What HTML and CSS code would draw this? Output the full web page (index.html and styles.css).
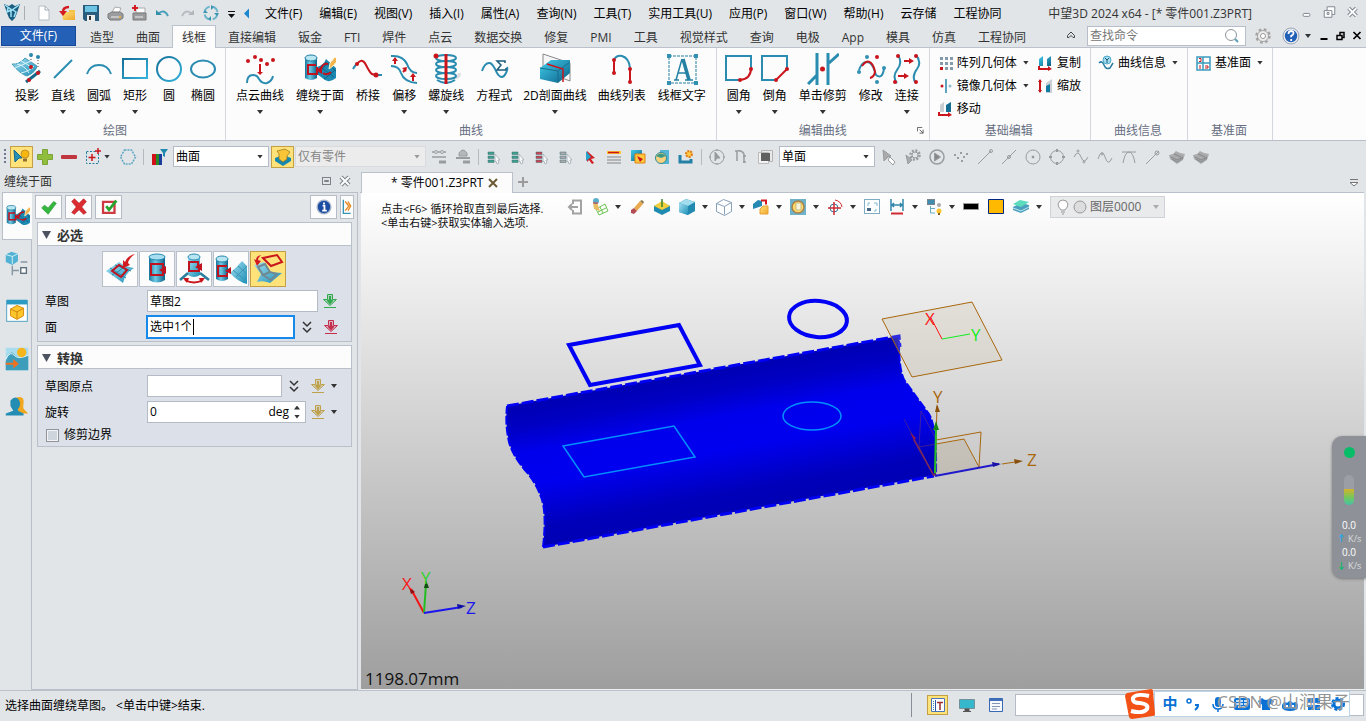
FILE: index.html
```html
<!DOCTYPE html>
<html lang="zh-CN">
<head>
<meta charset="utf-8">
<title>中望3D 2024 x64</title>
<link rel="stylesheet" href="styles.css">
</head>
<body>
<svg class="defs" aria-hidden="true">
<defs>
<linearGradient id="cyl" x1="0" x2="1" y1="0" y2="0"><stop offset="0" stop-color="#17759b"/><stop offset=".4" stop-color="#6fcbe6"/><stop offset="1" stop-color="#0d6287"/></linearGradient>
<linearGradient id="mesh" x1="0" x2="1" y1="0" y2="1"><stop offset="0" stop-color="#a5e1f2"/><stop offset="1" stop-color="#1c8fb7"/></linearGradient>
<linearGradient id="deep" x1="0" x2="1" y1="0" y2="1"><stop offset="0" stop-color="#41cdec"/><stop offset="1" stop-color="#0a5f86"/></linearGradient>
<linearGradient id="pipe" x1="0" x2="1" y1="0" y2="1"><stop offset="0" stop-color="#156f98"/><stop offset="1" stop-color="#35b3dc"/></linearGradient>
<linearGradient id="gold" x1="0" x2="1" y1="0" y2="1"><stop offset="0" stop-color="#ffe07a"/><stop offset="1" stop-color="#f0a828"/></linearGradient>
<linearGradient id="surf" gradientUnits="userSpaceOnUse" x1="506" y1="405" x2="532" y2="548"><stop offset="0" stop-color="#0000b2"/><stop offset=".16" stop-color="#0000c4"/><stop offset=".34" stop-color="#0000ec"/><stop offset=".56" stop-color="#0000f0"/><stop offset=".7" stop-color="#0000d8"/><stop offset=".86" stop-color="#0000ba"/><stop offset="1" stop-color="#0000b4"/></linearGradient>
</defs>
<symbol id="wrap" viewBox="0 0 32 32">
<path d="M13 14q7-2 9-8l10 9v10q-6 5-11 2l-8-6z" fill="#1c8ab2"/><path d="M16 14l14 10M21 9l11 9M14 20l8-8 9-5M20 26q5-3 11-9" stroke="#0f6488" fill="none"/>
<path d="M1 5v20q6 4 12 0V5z" fill="url(#cyl)"/><ellipse cx="7" cy="5" rx="6" ry="3" fill="#b9e6f3" stroke="#1c7ba0"/>
<path d="M12 12H4v9h9V14" fill="none" stroke="#c1121f" stroke-width="2"/><path d="M12 17l6-4v8z" fill="#c1121f"/><path d="M17 16q2-6 7-5m-5 9q4 3 8-1" fill="none" stroke="#c1121f" stroke-width="2"/><path d="M25 16l1-6 5-6 3 3-5 6z" fill="#f4b24a" stroke="#fff2d0"/>
</symbol>
<symbol id="down" viewBox="0 0 16 16"><path d="M5.500 1.500h5v5h4L8 12.500 1.500 6.500h4z" fill="currentColor" fill-opacity=".25" stroke="currentColor"/><path d="M8 3v6M5.500 7l2.500 3 2.500-3" stroke="currentColor" stroke-width="2" fill="none"/><path d="M2 14.500h12" stroke="currentColor"/></symbol>
<symbol id="chev" viewBox="0 0 12 14"><path d="M2 2l4 4 4-4M2 8l4 4 4-4" fill="none" stroke="#333" stroke-width="1.500"/></symbol>
<symbol id="rows" viewBox="0 0 24 24"><path d="M6 7h6v2.500H6zM6 11h6v2.500H6zM6 15h6v2.500H6z" fill="currentColor" stroke="#46707c" stroke-width=".5"/><path d="M13 9l5 6h-2l1 3-2 1-1-3-1 1z" fill="#f4f6f8" stroke="#9aa6ae" stroke-width=".7"/></symbol>
<symbol id="layers" viewBox="0 0 24 24"><path d="M4 10l4-1 3-3 4 2 5 1-2 6-6 4-7-5z" fill="#a9abad"/><path d="M6 12l6 3 6-3M9 9l7 3M7 14l5 3 6-4" stroke="#858789" fill="none"/></symbol>
</svg>

<header class="titlebar">
<div class="quick">
<svg class="logo" viewBox="0 0 24 24"><path d="M4 3l5 2 3-2 3 2 5-2-3 9-2 5-3 3-3-3-2-5z" fill="#1d5f83"/><path d="M5 4l7 5 7-5M8 7l-1 4 4-2v7M13 9l3 2-2 5" stroke="#9ce1f4" stroke-width="1.500" fill="none"/></svg>
<i class="bar"></i>
<button aria-label="新建"><svg viewBox="0 0 24 24"><path d="M8 5h6l4 4v10H8z" fill="#fff" stroke="#b8bec5"/><path d="M14 5v4h4" fill="none" stroke="#a0a8b0"/></svg></button>
<button aria-label="打开"><svg viewBox="0 0 24 24"><path d="M7 11h13v8H8z" fill="url(#gold)"/><path d="M14 9h6v2h-6z" fill="#f2c347"/><path d="M14 6q-6 0-6 5" fill="none" stroke="#d31c21" stroke-width="2.500"/><path d="M4 10h8l-4 5z" fill="#d31c21"/></svg></button>
<button aria-label="保存"><svg viewBox="0 0 24 24"><path d="M4 4h16v16H6l-2-2z" fill="#2a5d7d"/><path d="M6 5h12v6H6z" fill="#6cc4e2"/><path d="M8 14h8v6H8z" fill="#eee"/><path d="M10 15h2v4h-2z" fill="#333"/></svg></button>
<button aria-label="打印"><svg viewBox="0 0 24 24"><path d="M9 11l3-5 6 1-2 5z" fill="#fff" stroke="#aaa"/><path d="M5 13l4-2h8l3 2v4l-3 2H7l-2-2z" fill="#9b9c9e" stroke="#7b7b7b"/><path d="M8 16h8" stroke="#eee"/><circle cx="17" cy="16" r="1" fill="#eeb428"/></svg></button>
<button aria-label="打印预览"><svg viewBox="0 0 24 24"><path d="M9 7h9v5H9z" fill="#fff" stroke="#aaa"/><path d="M6 12h13v7H6z" fill="#9b9c9e" stroke="#7b7b7b"/><path d="M8 16h8" stroke="#eee"/><path d="M8 4v6M5 7h6" stroke="#d31c21" stroke-width="2"/></svg></button>
<button aria-label="撤销"><svg viewBox="0 0 24 24"><path d="M8 12q6-4 9 3" stroke="#4aa0bb" stroke-width="2" fill="none"/><path d="M5 9v5h6z" fill="#318fac"/></svg></button>
<button aria-label="重做"><svg viewBox="0 0 24 24"><path d="M16 12q-6-4-9 3" stroke="#b9bdc1" stroke-width="2" fill="none"/><path d="M19 9v5h-6z" fill="#b2b7bc"/></svg></button>
<button aria-label="刷新"><svg viewBox="0 0 24 24"><circle cx="12" cy="12" r="6.500" fill="none" stroke="#6db4ca" stroke-width="2" stroke-dasharray="7.200 3" stroke-dashoffset="-1"/><path d="M12 4l3 2-3 3zM20 12l-2 3-3-3zM12 20l-3-2 3-3zM4 12l2-3 3 3z" fill="#3a95b3"/></svg></button>
<button class="narrow" aria-label="自定义"><svg viewBox="0 0 16 24"><path d="M5 10.500h7" stroke="#111"/><path d="M5 13h7l-3.500 4z" fill="#111"/></svg></button>
<button class="narrow" aria-label="返回"><svg viewBox="0 0 16 24"><path d="M5 12.500l5-5v10z" fill="#1b87cf"/></svg></button>
</div>
<nav class="menu"><a href="#">文件(F)</a><a href="#">编辑(E)</a><a href="#">视图(V)</a><a href="#">插入(I)</a><a href="#">属性(A)</a><a href="#">查询(N)</a><a href="#">工具(T)</a><a href="#">实用工具(U)</a><a href="#">应用(P)</a><a href="#">窗口(W)</a><a href="#">帮助(H)</a><a href="#">云存储</a><a href="#">工程协同</a></nav>
<h1>中望3D 2024 x64 - [* 零件001.Z3PRT]</h1>
<div class="winctl">
<button aria-label="最小化"><svg viewBox="0 0 24 24"><rect x="8.500" y="12.500" width="7" height="3" rx="1" fill="#fff" stroke="#7d858e"/></svg></button>
<button aria-label="还原"><svg viewBox="0 0 24 24"><path d="M9.500 5.500h8v8h-3v3h-8v-7h3z" fill="#fff" stroke="#7d858e"/><path d="M9 9.500h5.500v4M9.500 11.500h2v2h-2z" fill="none" stroke="#7d858e"/></svg></button>
<button aria-label="关闭"><svg viewBox="0 0 24 24"><path d="M8 7l8 8M16 7l-8 8" stroke="#7d858e" stroke-width="4"/><path d="M8 7l8 8M16 7l-8 8" stroke="#fff" stroke-width="2"/></svg></button>
</div>
</header>

<div class="tabbar">
<button class="file">文件(F)</button>
<nav class="tabs"><a href="#">造型</a><a href="#">曲面</a><a href="#" class="on">线框</a><a href="#">直接编辑</a><a href="#">钣金</a><a href="#">FTI</a><a href="#">焊件</a><a href="#">点云</a><a href="#">数据交换</a><a href="#">修复</a><a href="#">PMI</a><a href="#">工具</a><a href="#">视觉样式</a><a href="#">查询</a><a href="#">电极</a><a href="#">App</a><a href="#">模具</a><a href="#">仿真</a><a href="#">工程协同</a></nav>
<div class="tabtools">
<button aria-label="折叠"><svg viewBox="0 0 24 24"><path d="M9.500 11.500L13 8l3.500 3.500M9.500 11.500v2h1.500l2-2 2 2h1.500v-2" fill="none" stroke="#444"/></svg></button>
<label class="search"><input type="text" placeholder="查找命令" aria-label="查找命令"><svg viewBox="0 0 18 18"><circle cx="8" cy="8" r="5.500" fill="#fff" stroke="#8a959c"/><path d="M12 12l3 3" stroke="#5d9eb0" stroke-width="2"/></svg></label>
<button class="gear" aria-label="设置"><svg viewBox="0 0 24 24"><circle cx="12" cy="12" r="6.500" fill="#e8e8e8" stroke="#a4a4a4" stroke-width="2.500" stroke-dasharray="2.700 2.400"/><circle cx="12" cy="12" r="5.500" fill="#ececec" stroke="#a4a4a4"/><circle cx="12" cy="12" r="2.500" fill="#fff" stroke="#999"/></svg></button>
<button aria-label="帮助"><svg viewBox="0 0 24 24"><circle cx="12" cy="12" r="7" fill="#2360b8" stroke="#eee" stroke-width="1.500"/><circle cx="12" cy="12" r="8" fill="none" stroke="#7a8ba3" stroke-width=".7"/><path d="M9.500 10q0-3 2.700-3 2.500.2 2.300 2.300-.2 1.300-2.300 2.500v1.500M12.200 15v2" stroke="#fff" stroke-width="1.800" fill="none"/></svg></button>
<i class="caret"></i>
<div class="mdi">
<button aria-label="最小化文档"><svg viewBox="0 0 16 24"><path d="M5 15h7" stroke="#000" stroke-width="2"/></svg></button>
<button aria-label="还原文档"><svg viewBox="0 0 16 24"><path d="M4.500 11.500h5v4h-5zM7.500 11V8.500h4v5H10" fill="none" stroke="#000" stroke-width="1.500"/></svg></button>
<button aria-label="关闭文档"><svg viewBox="0 0 16 24"><path d="M4 8l7 7M11 8l-7 7" stroke="#000" stroke-width="1.700"/></svg></button>
</div>
</div>
</div>

<div class="ribbon">
<section class="group first">
<div class="tools">
<button class="big"><svg viewBox="0 0 32 32"><path d="M1 11q7 1 13-6l12 8q-1 6-10 10-7-2-15-12z" fill="url(#mesh)" stroke="#4a9dba"/><path d="M6 11q7 1 12 9M10 8q7 3 12 8M4 15l16-7M10 20q9-2 13-7" fill="none" stroke="#dff5fc"/><path d="M20 3v4M27 4v11" stroke="#444" stroke-dasharray="1 2"/><circle cx="20" cy="2" r="2" fill="#2a86aa"/><circle cx="27" cy="4" r="2" fill="#2a86aa"/><path d="M15 29l14-11" stroke="#15688b" stroke-width="3"/><circle cx="20" cy="14" r="2" fill="#c9161d"/><circle cx="18" cy="27" r="2" fill="#c9161d"/><circle cx="27" cy="20" r="2" fill="#c9161d"/></svg><span>投影</span><i class="caret"></i></button>
<button class="big"><svg viewBox="0 0 32 32"><path class="t" d="M7 25L25 7"/></svg><span>直线</span><i class="caret"></i></button>
<button class="big"><svg viewBox="0 0 32 32"><path class="t" d="M4 21q3-9 12-9 9 0 12 9"/></svg><span>圆弧</span><i class="caret"></i></button>
<button class="big"><svg viewBox="0 0 32 32"><rect class="t" x="4" y="6" width="24" height="19"/></svg><span>矩形</span><i class="caret"></i></button>
<button class="big one"><svg viewBox="0 0 32 32"><circle class="t" cx="16" cy="16" r="12"/></svg><span>圆</span></button>
<button class="big"><svg viewBox="0 0 32 32"><ellipse class="t" cx="16" cy="16" rx="12" ry="8.500"/></svg><span>椭圆</span></button>
</div><h2>绘图</h2></section>

<section class="group">
<div class="tools">
<button class="big"><svg viewBox="0 0 32 32"><path class="t" d="M3 30q0-8 6-8 4 0 6 4 3 5 8 4 5-2 6-7"/><path class="r" d="M16 11v9"/><path class="rf" d="M13 19h6l-3 3z"/><g class="rf"><circle cx="4" cy="8" r="2"/><circle cx="11" cy="4" r="2"/><circle cx="17" cy="7" r="2"/><circle cx="23" cy="11" r="2"/><circle cx="29" cy="7" r="2"/></g></svg><span>点云曲线</span><i class="caret"></i></button>
<button class="big"><svg><use href="#wrap"/></svg><span>缠绕于面</span><i class="caret"></i></button>
<button class="big"><svg viewBox="0 0 32 32"><path class="t" d="M1 16q3-5 5-6M24 22h6"/><path class="r" d="M5 11q5-7 9 1t6 9q2 1 5 1"/><circle class="rf" cx="5" cy="11" r="2"/><circle class="rf" cx="24" cy="22" r="2.500"/></svg><span>桥接</span></button>
<button class="big"><svg viewBox="0 0 32 32"><path class="t" d="M3 3q12-1 16 8 3 9 10 9M3 13q8 0 10 7 3 9 16 10"/><path class="r" d="M7 11V6M15 19l3-3M25 28v-6"/><path class="rf" d="M4 8l3-4 3 4zM14 15l5-1-1 5zM22 24l3-4 3 4z"/></svg><span>偏移</span><i class="caret"></i></button>
<button class="big"><svg viewBox="0 0 32 32"><path d="M18 26q13-1 11-6" fill="none" stroke="#ddd" stroke-width="3"/><g class="t"><ellipse cx="16" cy="5" rx="10" ry="3"/><ellipse cx="16" cy="11" rx="10" ry="3"/><ellipse cx="16" cy="17" rx="10" ry="3"/><ellipse cx="16" cy="23" rx="10" ry="3"/><path d="M7 27q9 6 18 0"/></g><path d="M16 1v30" stroke="#c9161d" stroke-width="3"/><circle class="rf" cx="6" cy="3" r="2.500"/></svg><span>螺旋线</span><i class="caret"></i></button>
<button class="big"><svg viewBox="0 0 32 32"><path class="t" d="M4 18q3-9 8-8 3 1 7 10 5 8 9 0 2-4 1-6"/><path d="M27 10V8h-8l4 4-4 5h9v-2" fill="none" stroke="#195c7a" stroke-width="1.500"/></svg><span>方程式</span></button>
<button class="big snug"><svg viewBox="0 0 32 32"><path d="M4 1l27 9v18L4 18z" fill="#f7f7f7" stroke="#888"/><path d="M1 15l11-8h19v13L19 30 1 26z" fill="url(#deep)"/><path d="M1 15l18 3 12-9M19 18v11" fill="none" stroke="#1b6d8d"/><path d="M8 11l16 5v13" fill="none" stroke="#c9161d" stroke-width="1.500"/></svg><span>2D剖面曲线</span><i class="caret"></i></button>
<button class="big"><svg viewBox="0 0 32 32"><path class="t" d="M8 7q2-5 8-4 7 2 8 12"/><path class="r" d="M8 7v13M24 16v13"/><g class="rf"><circle cx="8" cy="7" r="2"/><circle cx="8" cy="20" r="2"/><circle cx="24" cy="16" r="2"/><circle cx="24" cy="29" r="2"/></g></svg><span>曲线列表</span></button>
<button class="big"><svg viewBox="0 0 32 32"><rect x="3" y="3" width="27" height="27" fill="none" stroke="#247fa1" stroke-dasharray="3 1"/><path d="M17 6l6 21" fill="none" stroke="#2580a3" stroke-width="3.500"/><path d="M16 6L10 27M12 20h9M8 27h5M19 27h8" fill="none" stroke="#2580a3" stroke-width="1.500"/><path d="M1 1h4v4H1zM28 1h4v4h-4zM1 28h4v4H1zM28 28h4v4h-4z" fill="#3291b3"/></svg><span>线框文字</span></button>
</div><h2>曲线</h2></section>

<section class="group">
<div class="tools">
<button class="big"><svg viewBox="0 0 32 32"><path class="t" d="M28 15V3H3v24h14"/><path class="r" d="M17 27q11-1 11-12"/><circle class="rf" cx="17" cy="27" r="2"/><circle class="rf" cx="28" cy="16" r="2"/></svg><span>圆角</span><i class="caret"></i></button>
<button class="big"><svg viewBox="0 0 32 32"><path class="t" d="M28 15V3H3v24h14"/><path class="r" d="M17 27l11-11"/><circle class="rf" cx="17" cy="27" r="2"/><circle class="rf" cx="28" cy="16" r="2"/></svg><span>倒角</span><i class="caret"></i></button>
<button class="big"><svg viewBox="0 0 32 32"><path class="t thick" d="M10 0v32M21 0v32M1 31l9-9M22 10l10-9"/><circle class="rf" cx="15.500" cy="16" r="2.500"/></svg><span>单击修剪</span><i class="caret"></i></button>
<button class="big"><svg viewBox="0 0 32 32"><path class="t" d="M4 17q4-11 11-7 3 2 6 12 6 5 8-6"/><path class="r" d="M7 13q5-7 9-3 3 3 4 9-1 5-5 6"/><circle class="rf" cx="22" cy="4" r="2"/><g fill="#3291b3"><circle cx="12" cy="4" r="2"/><circle cx="4" cy="19" r="2"/><circle cx="29" cy="15" r="2"/><circle cx="22" cy="29" r="2"/></g></svg><span>修改</span></button>
<button class="big"><svg viewBox="0 0 32 32"><path class="t" d="M7 2q5 8-1 15-5 7 0 13M25 2q6 7 1 14-6 8-1 14"/><path class="r" d="M13 8h7M7 23h7"/><path class="rf" d="M18 5l5 3-5 3zM13 20l5 3-5 3z"/><g class="rf"><circle cx="7" cy="3" r="2"/><circle cx="25" cy="3" r="2"/><circle cx="4" cy="29" r="2"/><circle cx="25" cy="29" r="2"/></g></svg><span>连接</span><i class="caret"></i></button>
</div><h2>编辑曲线<svg class="launch" viewBox="0 0 8 8"><path d="M.500 5V.500H6M3 3l4 4M7 3v4H3" fill="none" stroke="#555"/></svg></h2></section>

<section class="group small">
<div class="tools">
<div class="col">
<button><svg viewBox="0 0 16 16"><g fill="#849bab"><path d="M3 2h3v3H3zM8 2h3v3H8zM13 2h3v3h-3zM3 7h3v3H3zM8 7h3v3H8zM13 7h3v3h-3zM8 12h3v3H8zM13 12h3v3h-3z"/></g><path class="rf" d="M3 12h3v3H3z"/></svg>阵列几何体<i class="caret"></i></button>
<button><svg viewBox="0 0 16 16"><path d="M9 1v14" stroke="#2686aa" stroke-width="1.500"/><circle class="rf" cx="5" cy="8" r="1.500"/><circle cx="13" cy="8" r="1.500" fill="#8fbccd"/></svg>镜像几何体<i class="caret"></i></button>
<button><svg viewBox="0 0 16 16"><path d="M3 11V4l4-3v10z" fill="#c9ced2"/><path d="M9 11V4l5-3v10z" fill="#156d91"/><path class="r" d="M2 11v3h11"/><path class="rf" d="M11 11l4 3-4 2z"/></svg>移动</button>
</div>
<div class="col">
<button><svg viewBox="0 0 16 16"><path d="M2 11V4l4-3v10zM10 11V4l4-3v10z" fill="url(#deep)"/><path class="r" d="M2 11v3h11"/><path class="rf" d="M11 11l4 3-4 2z"/></svg>复制</button>
<button><svg viewBox="0 0 16 16"><path class="r" d="M3 2v12"/><path class="rf" d="M1 4l2-3 2 3zM1 12l2 3 2-3z"/><path d="M9 15V5l6-4v14z" fill="#c9cfd2"/><path d="M9 14V8l4-2v8z" fill="#107ba2"/></svg>缩放</button>
</div>
</div><h2>基础编辑</h2></section>
<section class="group small"><div class="tools"><button><svg viewBox="0 0 16 16"><path d="M1 8q3-3 5 2t6 3l3-5" fill="none" stroke="#287ca1" stroke-width="1.500"/><circle cx="9" cy="5" r="4" fill="#a5dbef" stroke="#4da9ca"/><path d="M7 3l2 2 2-2M9 5v3" fill="none" stroke="#165d7d"/></svg>曲线信息<i class="caret"></i></button></div><h2>曲线信息</h2></section>
<section class="group small"><div class="tools"><button><svg viewBox="0 0 16 16"><path d="M2 2h13v13H2zM8 2v13M2 8h13" fill="#fff" stroke="#3a9abc" stroke-width="1.500"/><path d="M4 3.500h2v3H4M5 10v4M10 11h3v2h-3" fill="none" stroke="#c9161d"/></svg>基准面<i class="caret"></i></button></div><h2>基准面</h2></section>
</div>

<div class="toolbar">
<i class="grip"></i>
<button class="hot" aria-label="拾取提示"><svg viewBox="0 0 24 24"><path d="M4 5l8 8H9l-4 4z" fill="#268fb5" stroke="#15688a"/><circle cx="15" cy="9" r="4" fill="#f6b80d" stroke="#c8902a"/><path d="M13 15h4" stroke="#93702d" stroke-width="3"/></svg></button>
<button aria-label="添加"><svg viewBox="0 0 24 24"><path d="M9.500 4.500h5v5h5v5h-5v5h-5v-5h-5v-5h5z" fill="#90bd3c" stroke="#7ba438"/></svg></button>
<button aria-label="移除"><svg viewBox="0 0 24 24"><rect x="4" y="10" width="16" height="4" rx="1" fill="#bf3640"/></svg></button>
<button aria-label="框选"><svg viewBox="0 0 24 24"><path d="M5.500 6.500h12v12h-12z" fill="none" stroke="#237e9e" stroke-dasharray="2 1.500"/><path d="M11 9v7M7.500 12.500h7M17 3v6M14 6h6" stroke="#c9161d" stroke-width="1.500"/></svg></button>
<i class="caret"></i>
<button class="off2" aria-label="多边形选择"><svg viewBox="0 0 24 24"><path d="M8.500 5h7l4 7-4 7h-7l-4-7z" fill="none" stroke="#61a8c2" stroke-width="1.500" stroke-dasharray="2 1"/></svg></button>
<i class="sep"></i>
<button aria-label="过滤器"><svg viewBox="0 0 24 24"><path d="M5 9h4v11H5z" fill="#d01218"/><path d="M9 9h3v11H9z" fill="#268826"/><path d="M12 9h3v11h-3z" fill="#1a3c9a"/><path d="M13 4h8l-3 4v4l-2-1V8z" fill="#2089af"/></svg></button>
<label class="combo"><select aria-label="过滤类型"><option>曲面</option></select><i class="caret"></i></label>
<button class="hot" aria-label="仅拾取"><svg viewBox="0 0 24 24"><path d="M4 13l8-3 8 3v3l-8 5-8-5z" fill="#1687ad"/><path d="M6 6l8-2 5 3-3 4v3l-4 3-4-3V9z" fill="#f8c537" stroke="#94721c" stroke-width=".7"/></svg></button>
<label class="combo wide dis"><select aria-label="范围" disabled><option>仅有零件</option></select><i class="caret"></i></label>
<button class="g" aria-label="链"><svg viewBox="0 0 24 24"><path d="M5 7h2M11 7h2M17 7h2M5 12h14" stroke-width="1.500"/><circle cx="9" cy="7" r="1.500"/><circle cx="15" cy="7" r="1.500"/><path d="M12 17h7" stroke-width="3"/></svg></button>
<button class="g" aria-label="相切链"><svg viewBox="0 0 24 24"><path d="M8 11V8q4-6 8 0v3z" fill="#b5b7b9"/><path d="M5 13h14" stroke-width="2"/><path d="M12 17h7" stroke-width="3"/></svg></button>
<i class="sep"></i>
<button class="cgreen" aria-label="选择全部"><svg><use href="#rows"/></svg></button>
<button class="cgreen" aria-label="选择最后"><svg><use href="#rows"/></svg></button>
<button class="cred" aria-label="反选"><svg><use href="#rows"/></svg></button>
<button class="cgray" aria-label="无选择"><svg><use href="#rows"/></svg></button>
<button aria-label="指针"><svg viewBox="0 0 24 24"><path d="M9 6l8 7-4 1 3 4-2 1-3-4-2 2z" fill="#d31c21"/><path d="M8 6v10l5-4z" fill="#25a5cc"/></svg></button>
<button aria-label="列表"><svg viewBox="0 0 24 24"><path d="M5 6h14v3H5z" fill="#ffc42d"/><path d="M6 7.500h11" stroke="#c9161d" stroke-width="1.500"/><path d="M5 12h14M5 15h14M5 18h14" stroke="#a5a5a5" stroke-width="1.500"/></svg></button>
<button aria-label="选取"><svg viewBox="0 0 24 24"><path d="M5 5h11v11H5z" fill="url(#deep)"/><path d="M9 9h10v9H9z" fill="#ffc83d" stroke="#e38313"/><path d="M11 11l6 3-3 3z" fill="#c9161d"/></svg></button>
<button aria-label="球"><svg viewBox="0 0 24 24"><path d="M10 5h9v14h-9z" fill="#53b5d3"/><circle cx="11" cy="13" r="5.500" fill="#f7d17f" stroke="#2d8b96"/><path d="M6 11q5-5 10 0l-5 2z" fill="#3c9985"/></svg></button>
<button aria-label="配置"><svg viewBox="0 0 24 24"><path d="M6 10v7h11v-3" fill="none" stroke="#2580a6" stroke-width="3"/><circle cx="15" cy="9" r="3" fill="#ffc640" stroke="#df7d1b" stroke-width="2" stroke-dasharray="2 1"/></svg></button>
<i class="sep"></i>
<button class="g" aria-label="拾取"><svg viewBox="0 0 24 24"><circle cx="12" cy="12" r="7"/><path d="M12 4v2M12 18v2M4 12h2M18 12h2"/><path d="M10 7l5 6h-3l-2 3z" fill="#999"/></svg></button>
<button class="g" aria-label="曲线拾取"><svg viewBox="0 0 24 24"><path d="M8 16V6q5-1 7 3v9M6 6h3M14 11h3M14 17h3" stroke-width="1.500"/></svg></button>
<button aria-label="面"><svg viewBox="0 0 24 24"><path d="M8.500 5.500h11v11h-11z" fill="#e8e8e8" stroke="#b4b4b4"/><path d="M5.500 7.500h10v11h-10z" fill="#f2f2f2" stroke="#bbb"/><path d="M8 8h9v8H8z" fill="#606060"/></svg></button>
<label class="combo"><select aria-label="面类型"><option>单面</option></select><i class="caret"></i></label>
<button class="g" aria-label="光标"><svg viewBox="0 0 24 24"><path d="M6 5l8 6-3 1-4 4z" fill="#aaa"/><path d="M13 12l5 5-2 3-5-5z" fill="#fff"/></svg></button>
<button class="g" aria-label="光标设置"><svg viewBox="0 0 24 24"><circle cx="14" cy="10" r="4.500" stroke-width="2.500" stroke-dasharray="2 1.500"/><circle cx="14" cy="10" r="3"/><path d="M5 10l6 5-4 4z" fill="#aaa"/></svg></button>
<button class="g" aria-label="播放"><svg viewBox="0 0 24 24"><circle cx="12" cy="12" r="7" stroke-width="1.500"/><path d="M9.500 8l6 4-6 4z" fill="#888"/></svg></button>
<button class="g" aria-label="点集"><svg viewBox="0 0 24 24"><path d="M5 10h2M11 8h2M17 9h2M8 13h2M14 12h2M12 16h2" stroke-width="2"/></svg></button>
<button class="g" aria-label="端点"><svg viewBox="0 0 24 24"><path d="M5 19L18 6"/><circle cx="18" cy="6" r="1.500"/></svg></button>
<button class="g" aria-label="中点"><svg viewBox="0 0 24 24"><path d="M5 19L19 5"/><circle cx="12" cy="12" r="1.500"/></svg></button>
<button class="g" aria-label="圆心"><svg viewBox="0 0 24 24"><circle cx="12" cy="12" r="7"/><circle cx="12" cy="12" r="1" fill="#777"/></svg></button>
<button class="g" aria-label="象限点"><svg viewBox="0 0 24 24"><circle cx="12" cy="12" r="6.500"/><path d="M12 4v3M12 17v3M4 12h3M17 12h3" stroke-width="2"/></svg></button>
<button class="g" aria-label="拐点"><svg viewBox="0 0 24 24"><path d="M5 12q4-8 7 0t7 0"/><circle cx="9" cy="6" r="1"/><circle cx="15" cy="17" r="1"/></svg></button>
<button class="g" aria-label="曲线点"><svg viewBox="0 0 24 24"><path d="M5 14q4-12 7-2t7 1"/><circle cx="9" cy="9" r="1"/></svg></button>
<button class="g" aria-label="相切"><svg viewBox="0 0 24 24"><path d="M5 7h14M6 18q2-11 6-11t6 11"/></svg></button>
<button class="g" aria-label="垂直"><svg viewBox="0 0 24 24"><path d="M5 19L18 6"/><circle cx="16" cy="8" r="2"/></svg></button>
<button aria-label="面上点"><svg><use href="#layers"/></svg></button>
<button aria-label="面中点"><svg><use href="#layers"/></svg></button>
</div>

<main>
<aside>
<div class="ptitle"><span>缠绕于面</span><button aria-label="停靠"><svg viewBox="0 0 16 16"><rect x="4.500" y="3.500" width="8" height="7" fill="none" stroke="#7c8288"/><path d="M6.500 6.500h4v1h-4z" fill="none" stroke="#7c8288"/></svg></button><button aria-label="关闭面板"><svg viewBox="0 0 16 16"><path d="M4 3l8 8M12 3l-8 8" stroke="#7c8288" stroke-width="4"/><path d="M4 3l8 8M12 3l-8 8" stroke="#fff" stroke-width="2"/></svg></button></div>
<div class="pbody">
<nav class="side">
<a href="#" class="on" aria-label="缠绕于面"><svg><use href="#wrap"/></svg></a>
<a href="#" aria-label="管理器"><svg viewBox="0 0 32 32"><path d="M4 7l6-3 7 2v8l-6 4-7-3z" fill="#51b2d4"/><path d="M4 7l7 2 6-3M11 9v8" stroke="#d7f2fa" fill="none"/><path d="M11 19v10M11 24h7M20 15h7" stroke="#8796a2" stroke-width="1.500"/><rect x="20" y="21" width="6" height="6" fill="#fff" stroke="#60717d" stroke-width="1.500"/></svg></a>
<a href="#" aria-label="视图"><svg viewBox="0 0 32 32"><rect x="5" y="5" width="22" height="22" fill="#fff" stroke="#4a9fbd"/><path d="M5 4h22v5H5z" fill="#2a9bc2"/><path d="M9 14l7-4 7 3v8l-7 4-7-4z" fill="#ffc52d" stroke="#d68b0b"/><path d="M9 14l7 3 7-4M16 17v7" stroke="#c98107" fill="none"/></svg></a>
<a href="#" aria-label="视觉"><svg viewBox="0 0 32 32"><rect x="4" y="4" width="24" height="24" fill="#a8ddf0"/><path d="M4 18q5-13 9-7t15 1v16H4z" fill="#3f9dbc"/><path d="M4 16q5-9 9-4t15 0" fill="none" stroke="#e5f5fb"/><circle cx="21" cy="9" r="5" fill="#f7b51d"/><path d="M4 20h8v-4l6 5-6 5v-4H4z" fill="#ec7321"/></svg></a>
<a href="#" aria-label="用户"><svg viewBox="0 0 32 32"><path d="M15 6q9-3 8 6-1 6 1 7l4 4H17z" fill="#f0a71e"/><path d="M9 9q6-7 10 1 1 5-2 8v2l6 3v2H4v-2l8-3-3-5z" fill="#248db3"/></svg></a>
</nav>
<div class="form">
<div class="actions">
<button aria-label="确定"><svg viewBox="0 0 24 24"><path d="M4 13l3-3 4 3 6-7 3 2-9 12z" fill="#35b63d" stroke="#2c9a38" stroke-width=".7"/></svg></button>
<button aria-label="取消"><svg viewBox="0 0 24 24"><path d="M4 6l3-3 5 5 5-5 3 3-5 6 5 6-3 2-5-5-5 5-3-2 5-6z" fill="#db2a30" stroke="#b52129" stroke-width=".7"/></svg></button>
<button aria-label="应用"><svg viewBox="0 0 24 24"><path d="M16 18.500H5.500v-12H18v12h-3" fill="#fff" stroke="#ce3a42" stroke-width="2.500"/><path d="M9 11l3 4 8-10" fill="none" stroke="#26a52e" stroke-width="3"/></svg></button>
<button class="push" aria-label="信息"><svg viewBox="0 0 24 24"><circle cx="12" cy="12" r="7.500" fill="#1c4da3" stroke="#a7b5ca" stroke-width="1.500"/><path d="M12 7v2M10.500 10.500h2V16M10 16h5" stroke="#fff" stroke-width="2" fill="none"/></svg></button>
<button class="slim" aria-label="展开"><svg viewBox="0 0 12 24"><path d="M2 4v15h8" fill="none" stroke="#3695b8" stroke-width="1.500"/><path d="M4 6l4 5-4 5M7 6l3 5-3 5" fill="none" stroke="#e68a24" stroke-width="1.500"/></svg></button>
</div>
<section class="sec">
<h3><i></i>必选</h3>
<div class="modes">
<button aria-label="模式1"><svg viewBox="0 0 32 32"><path d="M2 18l13-9q7 5 15 6-9 5-11 15Q11 24 2 18z" fill="url(#mesh)"/><path d="M6 15l16 10M11 12l16 6M8 22q7-3 14-10" fill="none" stroke="#2887a8"/><path d="M8 18l7-6 8 5-6 7z" fill="none" stroke="#c1121f" stroke-width="2"/><path d="M31 1q-8 2-10 8l-2-2v8l7-3-2-2q1-5 7-9z" fill="#d31c21"/></svg></button>
<button aria-label="模式2"><svg viewBox="0 0 32 32"><path d="M8 4v23q8 5 16 0V4z" fill="url(#cyl)"/><ellipse cx="16" cy="4" rx="8" ry="3" fill="#a9def0" stroke="#238ab0"/><path d="M22 16v-5H10v11h12v-3" fill="none" stroke="#c1121f" stroke-width="2"/><path d="M18 17l7-4v8z" fill="#c1121f"/></svg></button>
<button aria-label="模式3"><svg viewBox="0 0 32 32"><path d="M10 4v18q6 4 12 0V4z" fill="url(#mesh)"/><ellipse cx="16" cy="4" rx="6" ry="3" fill="#b8e5f2" stroke="#238ab0"/><path d="M20 13V9h-9v9h10v-3" fill="none" stroke="#c1121f" stroke-width="2"/><path d="M17 14l7-4v8z" fill="#c1121f"/><path d="M2 27l8-7M22 20l9 7" stroke="#2a7e9e" stroke-width="2.500"/><path d="M7 27q9 5 18 0" stroke="#c9161d" stroke-width="2" fill="none"/><path class="rf" d="M5 25h6l-2 5zM27 25h-6l2 5z"/></svg></button>
<button aria-label="模式4"><svg viewBox="0 0 32 32"><path d="M15 20q7-6 12-12l5 5v18q-9-2-17-11z" fill="url(#mesh)"/><path d="M18 17l13 11M23 13l9 8M21 24l11-11" stroke="#3d93b0"/><path d="M1 6v20q6 4 12 0V6z" fill="url(#cyl)"/><ellipse cx="7" cy="6" rx="6" ry="3" fill="#b8e5f2" stroke="#238ab0"/><path d="M12 13H3v10h9v-3" fill="none" stroke="#c1121f" stroke-width="2"/><path d="M10 18l6-4v7z" fill="#c1121f"/></svg></button>
<button class="hot" aria-label="模式5"><svg viewBox="0 0 32 32"><path d="M2 12l10-3 6 10 12 1-12 10q-7-3-13-1l4-8z" fill="url(#mesh)"/><path d="M6 14l7-3 5 8-7 3zM11 22l7-3 7 2-6 6z" fill="none" stroke="#6f8994" stroke-width="2"/><path d="M11 5l14-3 5 7-11 4z" fill="none" stroke="#c9161d" stroke-width="2"/><path d="M9 2Q4 3 4 7L2 6l3 7 4-5-3-1q0-2 3-5z" fill="#d31c21"/></svg></button>
</div>
<div class="row"><label for="sk">草图</label><input id="sk" class="w171" value="草图2"><svg class="dn ok"><use href="#down"/></svg></div>
<div class="row"><label for="fc">面</label><span class="focus w149"><input id="fc" value="选中1个"></span><svg class="cv"><use href="#chev"/></svg><svg class="dn bad"><use href="#down"/></svg></div>
</section>
<section class="sec">
<h3><i></i>转换</h3>
<div class="row top"><label for="og">草图原点</label><input id="og" class="w135"><svg class="cv"><use href="#chev"/></svg><svg class="dn far"><use href="#down"/></svg><i class="caret"></i></div>
<div class="row"><label for="rt">旋转</label><span class="num"><input id="rt" value="0"><b>deg</b><span class="spin"><i></i><i></i></span></span><svg class="dn"><use href="#down"/></svg><i class="caret"></i></div>
<label class="check"><input type="checkbox">修剪边界</label>
</section>
</div>
</div>
</aside>

<section class="work">
<div class="docs"><a href="#" class="doc">* 零件001.Z3PRT<svg viewBox="0 0 12 12"><path d="M2 2l8 8M10 2l-8 8" stroke="#6b5a33" stroke-width="2"/></svg></a><button aria-label="新建标签"><svg viewBox="0 0 12 12"><path d="M6 1v10M1 6h10" stroke="#9c9c9c" stroke-width="2"/></svg></button><button class="more" aria-label="更多标签"><svg viewBox="0 0 12 12"><path d="M2 3.500h8M2 6.500h8L6 10z" fill="#fff" stroke="#777"/></svg></button></div>
<div class="view">
<svg class="scene" viewBox="360 192 1003 496" preserveAspectRatio="xMinYMin meet">
<path d="M506 405L898 335L899 346Q898 372 904 380L917 398L928 413Q936 426 935 474L542 546Q546 511 540 496Q535 481 523 468Q511 453 508 441Q504 424 506 405z" fill="url(#surf)"/>
<g fill="none" stroke="#0000f4" stroke-width="2"><path d="M506 405L898 335L899 346M542 546L933 475" stroke-width="3" stroke-dasharray="12 3"/><path d="M898 340Q898 372 904 380L917 398L928 413Q936 426 935 474M542 546Q546 511 540 496Q535 481 523 468Q511 453 508 441Q504 424 506 405" stroke-dasharray="9 2"/></g>
<path d="M568 344L678 324L699 364L589 384z" fill="none" stroke="#0000f4" stroke-width="4"/>
<ellipse cx="817" cy="318" rx="29" ry="18" transform="rotate(5 817 318)" fill="none" stroke="#0000f4" stroke-width="4"/>
<path d="M562 445L673 425L694 456L583 476z" fill="none" stroke="#0090ff" stroke-width="1.500"/>
<ellipse cx="811" cy="415" rx="29" ry="14" fill="none" stroke="#0090ff" stroke-width="1.500"/>
<path d="M881 318L971 301L1001 359L911 376z" fill="#cbb8a2" fill-opacity=".23" stroke="#a8670d"/>
<path d="M941 338L930 317" stroke="#ff1414"/><path d="M941 338L969 333" stroke="#13ed20"/>
<path d="M935 443L963 438L978 466L935 474z" fill="#b59e7d" fill-opacity=".25"/>
<path d="M935 439L980 431L978 466L963 438L935 443" fill="none" stroke="#a8670d"/>
<path d="M933 475L918 446L935 443M918 446L920 410L935 438M933 475L903 418" fill="none" stroke="#683273" stroke-opacity=".6"/>
<path d="M933 475L913 439" stroke="#832a54" stroke-width="1.500"/><path d="M909 431l6 6-2 3z" fill="#8a194d"/>
<path d="M934 475L936 405" stroke="#a8670d"/><path d="M936 403l3 8h-5z" fill="#8c520c"/>
<path d="M934 472L935 428" stroke="#23bc22" stroke-width="2"/><path d="M935 420l3 9h-6z" fill="#168216"/>
<path d="M934 475L998 463" stroke="#201acb" stroke-width="2"/><path d="M1000 463l-9-2 1 5z" fill="#1910a5"/><path d="M1001 463l13-2" stroke="#a8670d"/><path d="M1022 460l-9-2 1 5z" fill="#88500c"/>
<text x="924" y="324" class="ax red">X</text><text x="970" y="340" class="ax lime">Y</text><text x="932" y="402" class="ax brown">Y</text><text x="1026" y="465" class="ax brown">Z</text>
<path d="M423 612L410 588" stroke="#f31414" stroke-width="2"/><path d="M408 586l6 5-4 2z" fill="#8e1010"/>
<path d="M423 612L425 583" stroke="#22bd20" stroke-width="2"/><path d="M425 579l3 8h-5z" fill="#104f10"/>
<path d="M423 612L461 606" stroke="#1a14ed" stroke-width="2"/><path d="M465 605l-9-2 1 5z" fill="#1010a5"/>
<text x="401" y="589" class="ax red">X</text><text x="420" y="583" class="ax lime2">Y</text><text x="465" y="613" class="ax blue">Z</text>
</svg>
<div class="viewtop">
<p>点击&lt;F6&gt; 循环拾取直到最后选择.<br>&lt;单击右键&gt;获取实体输入选项.</p>
<div class="vtools">
<button aria-label="退出"><svg viewBox="0 0 24 24"><path d="M10 9V5.500h8v13h-8V15M6 12h9M9 9l-3 3 3 3" fill="none" stroke="#a2a2a2" stroke-width="2"/></svg></button>
<button aria-label="定位"><svg viewBox="0 0 24 24"><path d="M8 14l9-5 3 7-9 4zM10 17l8-4M12 12l3 6" fill="none" stroke="#6cc552"/><path d="M5 7h4l3 9-6-2z" fill="#e9bd68"/><circle cx="8" cy="6" r="3" fill="#5aaecb"/><path d="M5 8h5" stroke="#d43b3b"/></svg></button><i class="caret"></i>
<button aria-label="擦除"><svg viewBox="0 0 24 24"><path d="M9 13l6-7 3 3-6 7z" fill="#e8a94f"/><path d="M6 15l3-2 3 3-3 3-3-1z" fill="#b34d55"/><path d="M15 6l2-1 2 2-1 2z" fill="#8d7b4d"/></svg></button>
<button aria-label="基准"><svg viewBox="0 0 24 24"><path d="M4 11l8-4 8 4v5l-8 4-8-4z" fill="#208bb0"/><path d="M4 11l8-5 8 5-8 4z" fill="#f1ce3d"/><path d="M12 4v8" stroke="#33852c" stroke-width="1.500"/></svg></button>
<button aria-label="着色"><svg viewBox="0 0 24 24"><path d="M4 8l7-4 9 3v9l-7 4-9-3z" fill="#2289b1"/><path d="M4 8l7-4 9 3-7 4z" fill="#a2ddee"/><path d="M4 8l9 3v9l-9-3z" fill="url(#mesh)"/></svg></button><i class="caret"></i>
<button aria-label="线框"><svg viewBox="0 0 24 24"><path d="M4.500 8.500l7-4 8 3v9l-7 4-8-4zM4.500 8.500l8 3 7-4M12.500 11.500v8" fill="#fff" stroke="#87a1b8"/></svg></button><i class="caret"></i>
<button aria-label="视图方向"><svg viewBox="0 0 24 24"><path d="M4 9l5-4 4 1v5l-9 3z" fill="#2789b1"/><path d="M12 5.500h5v4" fill="none" stroke="#d31c21" stroke-width="2"/><path d="M11 14l3-3h5v8h-8z" fill="url(#gold)" stroke="#e8a03a"/></svg></button><i class="caret"></i>
<button aria-label="缩放"><svg viewBox="0 0 24 24"><path d="M4 4h16v16H4z" fill="#6db2c9"/><circle cx="12" cy="12" r="6" fill="#ffd86a" stroke="#a8804a" stroke-width="1.500"/><path d="M10 8h5v7h-5z" fill="#f4f4dd" stroke="#c9bb7b"/></svg></button><i class="caret"></i>
<button aria-label="目标"><svg viewBox="0 0 24 24"><circle cx="11" cy="13" r="4" fill="none" stroke="#367b9d"/><path d="M5 13h13M11 7v13" stroke="#d12a33" stroke-width="1.500"/><path d="M12 5q6 1 7 7" fill="none" stroke="#d12a33"/></svg></button><i class="caret"></i>
<button aria-label="全屏"><svg viewBox="0 0 24 24"><rect x="4.500" y="4.500" width="15" height="14" fill="#fff" stroke="#7facc2"/><path d="M14 8h3v3M8 11V8h2M16 14v2h-2" fill="none" stroke="#7fbcd0"/><path d="M7 13h4v3H7z" fill="#456887"/></svg></button>
<button aria-label="尺寸"><svg viewBox="0 0 24 24"><path d="M6 4v12M18 4v12M7 10h10M9 8l-2 2 2 2M15 8l2 2-2 2" fill="none" stroke="#3186a9" stroke-width="1.500"/><path d="M6 18.500h12" stroke="#d12a33" stroke-width="2"/></svg></button><i class="caret"></i>
<button aria-label="显示"><svg viewBox="0 0 24 24"><rect x="5.500" y="4.500" width="7" height="5" fill="#418caf" stroke="#758690"/><path d="M8.500 11v7H13M8.500 13.500H13" fill="none" stroke="#6aabc5"/><circle cx="17" cy="10" r="2" fill="#aaa"/><circle cx="17" cy="16" r="2.500" fill="#ffc22f"/><path d="M16 19h2" stroke="#805c1f" stroke-width="2"/></svg></button><i class="caret"></i>
<button aria-label="线色"><svg viewBox="0 0 24 24"><path d="M4.500 8.500h15v6h-15z" fill="#000" stroke="#999"/></svg></button>
<button aria-label="面色"><svg viewBox="0 0 24 24"><path d="M4.500 4.500h15v14h-15z" fill="#ffb900" stroke="#00257b"/></svg></button>
<button aria-label="图层"><svg viewBox="0 0 24 24"><path d="M4 12l8-4 8 2v4l-8 4-8-3z" fill="#4c9fbd"/><path d="M4 9l7-4 9 2-8 5z" fill="#5bdcbc"/><path d="M4 13l8 3 8-4" stroke="#bfe8ef" fill="none"/></svg></button><i class="caret"></i>
<button class="layer" disabled><svg viewBox="0 0 14 20"><path d="M5 13q-3-3-3-6 1-4 5-4t5 4q0 3-3 6zM5 15h4M6 17h2" fill="#fff" stroke="#999"/></svg><svg viewBox="0 0 14 20"><circle cx="7" cy="10" r="6" fill="#ddd" stroke="#999"/></svg><span>图层0000</span><i class="caret"></i></button>
</div>
</div>
<output>1198.07mm</output>
</div>
</section>
</main>

<footer>
<p>选择曲面缠绕草图。 &lt;单击中键&gt;结束.</p>
<div class="fbtns">
<button class="hot" aria-label="布局"><svg viewBox="0 0 20 20"><path d="M3.500 3.500h13v13h-13z" fill="#fff" stroke="#4a75b6"/><path d="M5.500 6v9" stroke="#38a" stroke-dasharray="1 1"/><path d="M7.500 5v11" stroke="#2b58a6"/><path d="M9 7.500h6M12 7v8" stroke="#9a2d31" stroke-width="1.500"/></svg></button>
<button aria-label="屏幕"><svg viewBox="0 0 20 20"><path d="M2.500 4.500h15v9h-15z" fill="#35b8cb" stroke="#71919b"/><path d="M8 14h4v2H8zM6 16.500h8" fill="#555" stroke="#555"/></svg></button>
<button aria-label="消息"><svg viewBox="0 0 20 20"><path d="M3.500 3.500h13v13h-13z" fill="#f6f8fb" stroke="#3968b3"/><path d="M4 5h12" stroke="#3f70bc" stroke-width="2"/><path d="M6 8.500h8M6 11.500h8M6 14h5" stroke="#8497b3"/></svg></button>
</div>
<input class="cmd" aria-label="命令">
</footer>

<div class="net">
<i class="dot"></i><i class="tube"></i>
<p>0.0</p><small><b class="up">↑</b> K/s</small>
<p>0.0</p><small><b class="dnl">↓</b> K/s</small>
</div>
<div class="ime">
<svg class="sogou" viewBox="0 0 32 32"><path d="M3 5l24-4q2 0 2 2l2 23q0 2-2 2L8 31q-2 0-3-2L1 8q0-2 2-3z" fill="#f35216"/><path d="M25 8q-13-3-16 2-1 5 7 5 9 1 7 6-4 5-16 2" fill="none" stroke="#fff" stroke-width="4"/></svg>
<div class="imebar"><b>中</b>
<svg viewBox="0 0 24 24"><circle cx="7" cy="9" r="2" fill="none" stroke="#0970d5" stroke-width="1.500"/><path d="M13 13h3q0 3-3 5" fill="none" stroke="#0970d5" stroke-width="2"/></svg>
<svg viewBox="0 0 24 24"><rect x="9" y="5" width="6" height="10" rx="3"/><path d="M7 12q0 5 5 5t5-5M12 17v3" fill="none" stroke="#0970d5" stroke-width="1.500"/></svg>
<svg viewBox="0 0 24 24"><rect x="4" y="6" width="16" height="12" rx="2"/><path d="M6 9h12M6 12h12M8 15h8" stroke="#fff" stroke-width="1.500" stroke-dasharray="3 1"/></svg>
<svg viewBox="0 0 24 24"><path d="M8 6q4 4 8 0l4 3-2 4-2-1v6H8v-6l-2 1-2-4z"/></svg>
<svg viewBox="0 0 24 24"><path d="M4 16v-3q2-5 5-2 3-4 6 0 4-3 5 2v3q-2 3-8 3-6 0-8-3z"/><path d="M8 14h2M14 14h2" stroke="#fff" stroke-width="2"/></svg>
<svg viewBox="0 0 24 24"><path d="M6 6h5v5H6zM13 6h5v5h-5zM6 13h5v5H6zM13 13h5v5h-5z"/></svg>
<svg viewBox="0 0 24 24"><circle cx="12" cy="12" r="4" fill="none" stroke="#0970d5" stroke-width="3"/><circle cx="12" cy="12" r="6" fill="none" stroke="#0970d5" stroke-width="2" stroke-dasharray="3 2"/></svg>
</div>
<span class="mark">CSDN @山涧果子</span>
</div>
</body>
</html>
```
FILE: styles.css
```css
* { box-sizing: border-box; }
body { margin: 0; min-height: 100vh; display: flex; flex-direction: column; background: #e1e5e8; color: #000; font: 12px/16px "Open Sans", "Noto Sans CJK SC", sans-serif; overflow: hidden; white-space: nowrap; }
h1, h2, h3, p { margin: 0; font-size: 12px; font-weight: 400; }
a { color: inherit; text-decoration: none; }
button { margin: 0; padding: 0; border: 0; background: none; font: inherit; color: inherit; display: flex; align-items: center; justify-content: center; }
input, select { font: inherit; color: #000; border: 1px solid #b4bac6; background: #fff; padding: 0 2px; margin: 0; min-width: 0; border-radius: 0; }
svg { display: block; flex: none; }
.defs { position: absolute; width: 0; height: 0; }
.caret { flex: none; width: 6px; height: 4px; background: #333; clip-path: polygon(0 0, 100% 0, 50% 100%); }
.t { fill: none; stroke: #2a8cb0; stroke-width: 2; }
rect.t, circle.t { stroke: url(#pipe); }
.thick { stroke-width: 3; }
.r { fill: none; stroke: #c9161d; stroke-width: 2; }
.rf { fill: #c9161d; stroke: none; }
.hot { background: #ffe27a; border: 1px solid #c3a046; }

.titlebar { height: 25px; display: flex; align-items: center; }
.quick { display: flex; align-items: center; }
.quick svg { width: 24px; height: 24px; }
.bar { width: 1px; height: 14px; margin-right: 6px; background: #a9adb2; }
.quick .narrow svg { width: 16px; }
.menu { display: flex; gap: 17px; margin-left: 10px; padding-top: 2px; }
.titlebar h1 { margin-left: auto; margin-right: 43px; padding-top: 2px; color: #333; }
.winctl { display: flex; margin-right: 2px; }
.winctl svg { width: 23px; height: 24px; }

.tabbar { height: 22px; display: flex; align-items: stretch; }
.file { width: 75px; margin: 1px 4px 1px 1px; background: #2460b6; color: #fff; border: 1px solid #19479a; }
.tabs { display: flex; gap: 2px; color: #333; }
.tabs a { padding: 5px 10px 0; border: 0 solid #bcc2cb; }
.tabs .on { position: relative; padding: 4px 9px 0; border-width: 1px 1px 0; background: #fcfcfc; margin-bottom: -1px; z-index: 1; }
.tabtools { display: flex; align-items: center; margin-left: auto; }
.tabtools svg { width: 24px; height: 24px; }
.search { display: flex; align-items: center; width: 159px; height: 20px; margin: 0 5px; background: #fff; border: 1px solid #b7bec9; }
.search input { flex: 1; border: 0; width: 0; background: none; }
.search input::placeholder { color: #777; opacity: 1; }
.search svg { width: 18px; height: 18px; margin-right: 4px; }
.gear { margin-right: 4px; }
.tabtools .caret { margin: 0 4px 0 2px; }
.mdi { display: flex; }
.mdi svg { width: 17px; }

.ribbon { display: flex; height: 94px; background: #fcfcfc; border-top: 1px solid #bcc2cb; border-bottom: 1px solid #b9bfc9; }
.group { display: flex; flex-direction: column; padding: 5px 4px 0; border-right: 1px solid #d3d7dd; }
.group.first { padding-left: 9px; }
.group .tools { display: flex; flex: 1; align-items: flex-start; }
.group h2 { height: 20px; line-height: 22px; text-align: center; color: #676f82; position: relative; }
.launch { position: absolute; right: 1px; top: 7px; width: 7px; height: 7px; }
.big { flex-direction: column; justify-content: flex-start; padding: 0 6px; }
.snug { padding: 0 5px; }
.big svg { width: 32px; height: 32px; margin: 0 -4px; }
.one svg { margin: 0 -6px; }
.big span { line-height: 22px; }
.big .caret { margin-top: 3px; }
.small { padding: 3px 9px 0 7px; }
.small .col { display: flex; flex-direction: column; margin-right: 8px; }
.small .col:last-child { margin-right: 0; }
.small button { height: 23px; gap: 4px; justify-content: flex-start; }
.small svg { width: 16px; height: 16px; }
.small .caret { margin-left: 2px; }

.toolbar { display: flex; align-items: center; height: 31px; padding-left: 4px; }
.toolbar svg { width: 24px; height: 24px; }
.toolbar .hot { width: 23px; height: 22px; overflow: hidden; }
.toolbar > .caret { margin-left: -1px; }
.grip { width: 2px; height: 16px; margin-right: 4px; background: repeating-linear-gradient(#6e7890 0 2px, transparent 2px 4px); }
.sep { width: 1px; height: 16px; margin: 0 3px; background: #b6babf; }
.off2 { margin-left: 6px; }
.combo { display: grid; align-items: center; width: 96px; height: 21px; margin: 0 2px; }
.combo > * { grid-area: 1 / 1; }
.combo select { appearance: none; width: 100%; height: 100%; opacity: 1; }
.combo .caret { justify-self: end; margin-right: 6px; pointer-events: none; }
.combo.wide { width: 131px; margin: 0 1px; }
.dis select { background: #ececec; color: #858585; border-color: #d8dadd; }
.dis .caret { background: #999; }
.g svg { fill: none; stroke: #999c9e; }
.cgreen { color: #3ba08a; }
.cred { color: #c9424f; }
.cgray { color: #aaa; }

main { flex: 1; display: flex; min-height: 0; }
aside { width: 360px; display: flex; flex-direction: column; }
.ptitle { display: flex; align-items: center; height: 20px; padding: 0 7px 0 4px; gap: 3px; color: #333; }
.ptitle span { margin-right: auto; }
.ptitle svg { width: 16px; height: 16px; }
.pbody { flex: 1; display: flex; margin: 0 2px; border-top: 1px solid #b9bfc9; border-right: 1px solid #b9bfc9; }
.side { width: 30px; border-right: 1px solid #b9bfc9; }
.side a { display: flex; align-items: center; justify-content: center; height: 48px; }
.side .on { height: 47px; margin-right: -1px; margin-bottom: -1px; background: #fcfcfc; border: 1px solid #b9bfc9; border-width: 0 0 1px 1px; }
.side svg { width: 30px; height: 30px; margin: 0 -2px; }
.side .on svg { width: 24px; height: 24px; }
.form { flex: 1; padding: 2px 5px; border-bottom: 1px solid #b9bfc9; }
.actions { display: flex; gap: 3px; margin: 0 -2px; }
.actions button { width: 27px; height: 24px; background: #fcfcfc; border: 1px solid #b7bdc8; }
.actions svg { width: 22px; height: 22px; }
.actions .push { margin-left: auto; }
.actions .slim { width: 14px; }
.actions .slim svg { width: 12px; }
.sec { margin-top: 3px; padding-bottom: 1px; background: #dce0e8; border: 1px solid #bac0ca; }
.sec h3 { display: flex; align-items: center; height: 23px; padding: 2px 0 0 4px; font-size: 13px; font-weight: 700; color: #333; gap: 6px; background: #fcfcfc; border-bottom: 1px solid #bac0ca; }
.sec h3 i { width: 9px; height: 8px; background: #4c5260; clip-path: polygon(0 0, 100% 0, 50% 100%); }
.modes { display: flex; gap: 1px; padding: 5px 0 1px 64px; }
.modes button { width: 36px; height: 36px; background: #fcfcfc; border: 1px solid #bac0ca; }
.modes .hot { background: #ffe27a; border-color: #c3a046; }
.modes svg { width: 32px; height: 32px; }
.row { display: flex; align-items: center; height: 26px; padding-left: 7px; }
.row.top { margin-top: 4px; }
.row > label { width: 102px; flex: none; padding-top: 1px; }
.row > input { height: 22px; }
.w171 { width: 171px; }
.w149 { width: 149px; }
.w135 { width: 135px; }
.focus { display: flex; align-items: center; height: 24px; border: 2px solid #168aec; margin-left: -1px; background: #fff; }
.focus input { border: 0; width: 46px; border-right: 1px solid #000; height: 16px; }
.row .cv { width: 12px; height: 14px; margin: 0 2px 0 6px; }
.row .dn { width: 16px; height: 16px; margin-left: 4px; color: #bda14b; }
.row .ok { color: #31a94c; }
.row .bad { color: #c42d4b; margin-left: 8px; }
.row .far { margin-left: 8px; }
.row .caret { margin-left: 5px; }
.num { display: flex; align-items: center; width: 159px; height: 22px; background: #fff; border: 1px solid #b4bac6; }
.num input { border: 0; flex: 1; }
.num b { font-weight: 400; }
.spin { display: flex; flex-direction: column; gap: 5px; margin: 0 5px; }
.spin i { width: 6px; height: 4px; background: #333; clip-path: polygon(0 0, 100% 0, 50% 100%); }
.spin i:first-child { clip-path: polygon(50% 0, 100% 100%, 0 100%); }
.check { display: flex; align-items: center; height: 20px; padding-left: 8px; gap: 5px; }
.check input { appearance: none; width: 13px; height: 13px; background: #cfd5dc; border: 1px solid #8d949b; box-shadow: inset 0 0 0 1px #f4f4f4; }

.work { flex: 1; display: flex; flex-direction: column; min-width: 0; margin-right: 2px; }
.docs { display: flex; align-items: center; height: 21px; border-bottom: 1px solid #bac0ca; }
.doc { display: flex; align-items: center; gap: 4px; height: 22px; margin: 0 0 -1px 1px; padding: 0 13px 0 29px; background: #fcfcfc; border: 1px solid #bac0ca; border-bottom: 0; }
.docs svg { width: 12px; height: 12px; }
.docs button { margin-left: 4px; }
.docs .more { margin: 0 4px 0 auto; }
.view { flex: 1; position: relative; display: flex; flex-direction: column; justify-content: space-between; margin-left: 1px; background: linear-gradient(#fff, #9e9e9e); border-bottom: 1px solid #eee; }
.scene { position: absolute; inset: 0; width: 100%; height: 100%; }
.ax { font: 17px "Open Sans", sans-serif; }
.red { fill: #fb1818; }
.lime { fill: #13ed20; }
.lime2 { fill: #2fd32b; }
.brown { fill: #a8670d; }
.blue { fill: #1c18ee; }
.viewtop { display: flex; position: relative; padding: 2px 0 0 20px; }
.viewtop p { width: 182px; padding-top: 7px; font-size: 11px; line-height: 14px; color: #111; }
.vtools { display: flex; align-items: center; height: 24px; }
.vtools svg { width: 24px; height: 24px; }
.vtools button + button { margin-left: 1px; }
.vtools > .caret { margin: 0 4px 0 3px; }
.vtools .layer { width: 115px; height: 22px; margin-left: 4px; padding: 0 5px; gap: 3px; background: #e9eaec; border: 1px solid #cfd2d7; color: #666; }
.vtools .layer svg { width: 14px; height: 20px; }
.layer .caret { background: #aaa; margin-left: auto; }
.view output { position: relative; padding: 0 4px; font-size: 17px; line-height: 20px; color: #111; }

footer { display: flex; align-items: center; height: 31px; padding: 0 2px 3px 5px; border-top: 1px solid #b9c1cb; }
footer p { margin-right: auto; padding-top: 3px; }
.fbtns { display: flex; align-items: center; gap: 8px; height: 24px; padding: 0 9px 0 15px; border-left: 1px solid #888e96; }
.fbtns button { width: 21px; height: 20px; }
.fbtns svg { width: 20px; height: 20px; }
.cmd { width: 349px; height: 22px; }

.net { position: absolute; right: 0; top: 436px; width: 34px; height: 142px; display: flex; flex-direction: column; align-items: center; padding-top: 11px; background: #8e9298; border-radius: 10px 0 0 10px; box-shadow: 0 1px 3px #777; color: #fff; }
.dot { width: 11px; height: 11px; border-radius: 50%; background: #07bd67; }
.tube { width: 10px; height: 30px; margin: 17px 0 13px; border-radius: 5px; background: linear-gradient(#9b9fa5 0 46%, #d4b32c 47%, #73c75d 75%, #43c3a7); }
.net p { font-size: 10px; line-height: 14px; }
.net small { font-size: 9px; line-height: 13px; color: #ddd; }
.up { color: #20a9ee; }
.dnl { color: #07bd67; }
.ime { position: absolute; right: 16px; bottom: 1px; display: flex; align-items: center; }
.sogou { width: 32px; height: 32px; margin-right: -2px; z-index: 1; }
.imebar { display: flex; align-items: center; width: 196px; height: 26px; padding-left: 3px; background: #fff; border: 1px solid #bdd3e8; }
.imebar svg, .imebar b { width: 24px; height: 24px; flex: none; fill: #0970d5; }
.imebar b { color: #0970d5; font-size: 15px; line-height: 22px; text-align: center; }
.mark { position: absolute; right: 0; bottom: 6px; color: #777c; font-size: 17px; line-height: 24px; text-shadow: 0 0 1px #fff; }
```
